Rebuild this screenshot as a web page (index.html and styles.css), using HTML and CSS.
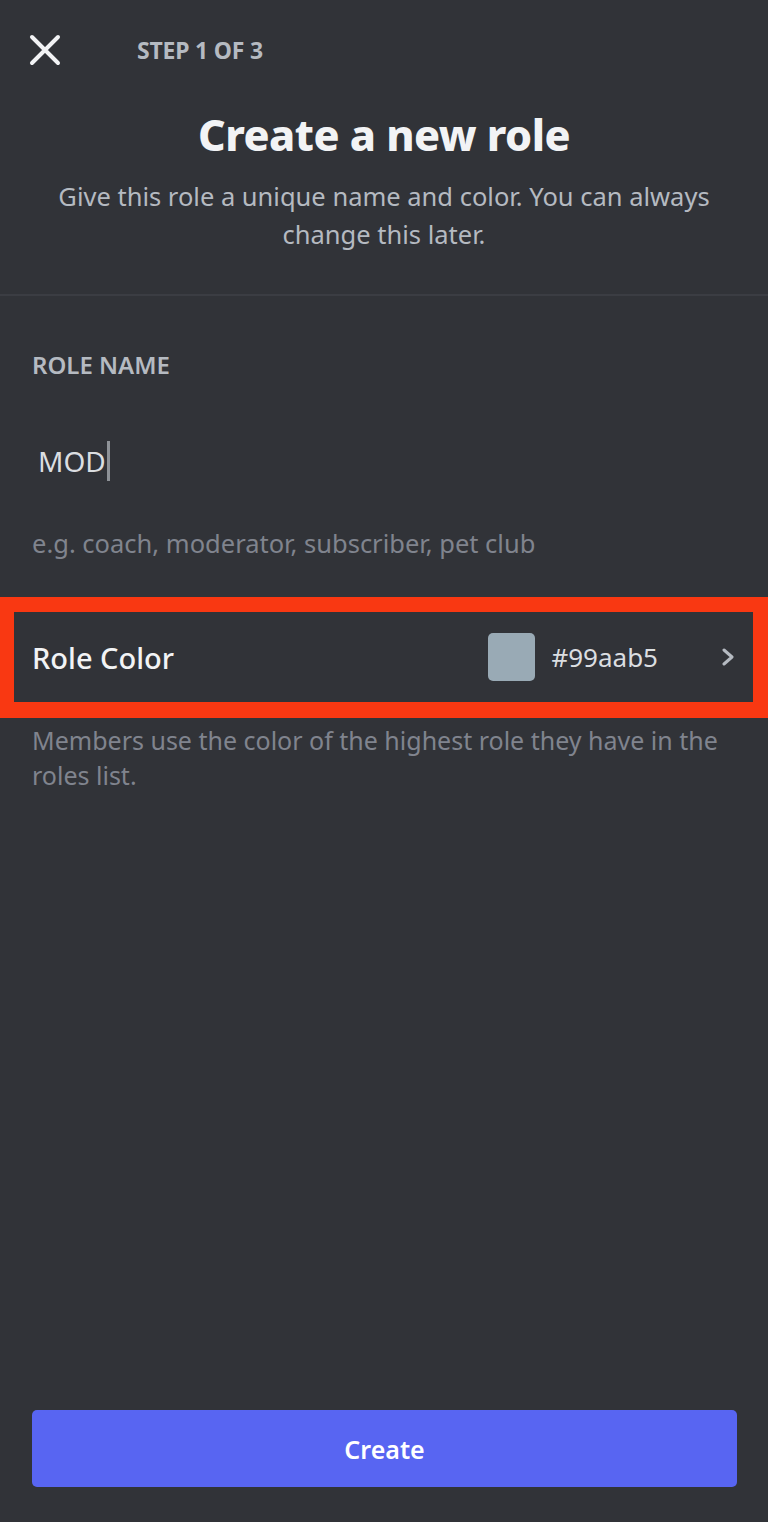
FILE: index.html
```html
<!DOCTYPE html>
<html lang="en">
<head>
<meta charset="utf-8">
<title>Create a new role</title>
<link rel="stylesheet" href="styles.css">
</head>
<body>
<div class="screen">
  <header class="topbar">
    <svg class="close" width="32" height="32" viewBox="0 0 32 32" aria-hidden="true">
      <path d="M3 3 L29 29 M29 3 L3 29" stroke="#f2f3f5" stroke-width="4" stroke-linecap="round"/>
    </svg>
    <span class="step">STEP 1 OF 3</span>
  </header>
  <section class="intro">
    <h1 class="title">Create a new role</h1>
    <p class="subtitle">Give this role a unique name and color. You can always change this later.</p>
  </section>
  <div class="divider"></div>
  <section class="form">
    <div class="label">ROLE NAME</div>
    <div class="input"><span class="value">MOD</span><span class="caret"></span></div>
    <div class="placeholder">e.g. coach, moderator, subscriber, pet club</div>
  </section>
  <div class="highlight">
    <div class="color-row">
      <span class="row-label">Role Color</span>
      <span class="swatch"></span>
      <span class="hex">#99aab5</span>
      <svg class="chev" width="16" height="18" viewBox="0 0 16 18" aria-hidden="true">
        <path d="M4 2 L12 9 L4 16" fill="none" stroke="#b5bac1" stroke-width="3" stroke-linecap="round" stroke-linejoin="round"/>
      </svg>
    </div>
  </div>
  <p class="hint">Members use the color of the highest role they have in the roles list.</p>
  <div class="spacer"></div>
  <div class="footer">
    <button class="create">Create</button>
  </div>
</div>
</body>
</html>
```

FILE: styles.css
```css
html, body {
  margin: 0;
  padding: 0;
  background: #313338;
}
.screen {
  width: 768px;
  height: 1522px;
  display: flex;
  flex-direction: column;
  font-family: "Noto Sans", "Open Sans", sans-serif;
  color: #f2f3f5;
  background: #313338;
}
.topbar {
  display: flex;
  align-items: center;
  height: 100px;
  padding-left: 29px;
  box-sizing: border-box;
}
.close {
  display: block;
}
.step {
  margin-left: 76px;
  font-size: 23px;
  font-weight: 700;
  color: #b5bac1;
  letter-spacing: -0.2px;
}
.intro {
  text-align: center;
  padding: 0 40px;
}
.title {
  margin: 0;
  font-size: 43px;
  font-weight: 800;
  line-height: 70px;
  color: #f2f3f5;
  letter-spacing: -0.5px;
}
.subtitle {
  margin: 7px 0 0;
  font-size: 25.5px;
  line-height: 38px;
  color: #b5bac1;
}
.divider {
  margin-top: 41px;
  height: 2px;
  background: #3b3d43;
}
.form {
  padding: 0 32px;
}
.label {
  margin-top: 54px;
  font-size: 24px;
  font-weight: 600;
  color: #b5bac1;
  line-height: 30px;
}
.input {
  margin-top: 61px;
  display: flex;
  align-items: center;
  height: 40px;
  padding-left: 6px;
}
.value {
  font-size: 28px;
  color: #dbdee1;
}
.caret {
  width: 3px;
  height: 40px;
  background: #8e9297;
  margin-left: 1px;
}
.placeholder {
  margin-top: 46px;
  font-size: 25.5px;
  color: #80848e;
  line-height: 32px;
}
.highlight {
  margin-top: 38px;
  border: 14px solid #f93812;
  border-top-width: 15px;
  border-bottom-width: 16px;
  border-right-width: 15px;
}
.color-row {
  display: flex;
  align-items: center;
  height: 90px;
  padding-left: 18px;
  padding-right: 17px;
}
.row-label {
  flex: 1;
  font-size: 29px;
  font-weight: 500;
  color: #f2f3f5;
}
.swatch {
  width: 47px;
  height: 48px;
  border-radius: 5px;
  background: #99aab5;
}
.hex {
  margin-left: 16px;
  margin-right: 62px;
  font-size: 26px;
  color: #dbdee1;
}
.chev {
  display: block;
}
.hint {
  margin: 5px 0 0;
  padding: 0 32px;
  font-size: 25px;
  line-height: 35px;
  color: #80848e;
}
.spacer {
  flex: 1;
}
.footer {
  padding: 0 31px 35px 32px;
}
.create {
  display: block;
  width: 100%;
  height: 77px;
  border: 0;
  border-radius: 5px;
  background: #5865f2;
  color: #ffffff;
  font-family: "Noto Sans", "Open Sans", sans-serif;
  font-size: 25px;
  font-weight: 600;
}
```
